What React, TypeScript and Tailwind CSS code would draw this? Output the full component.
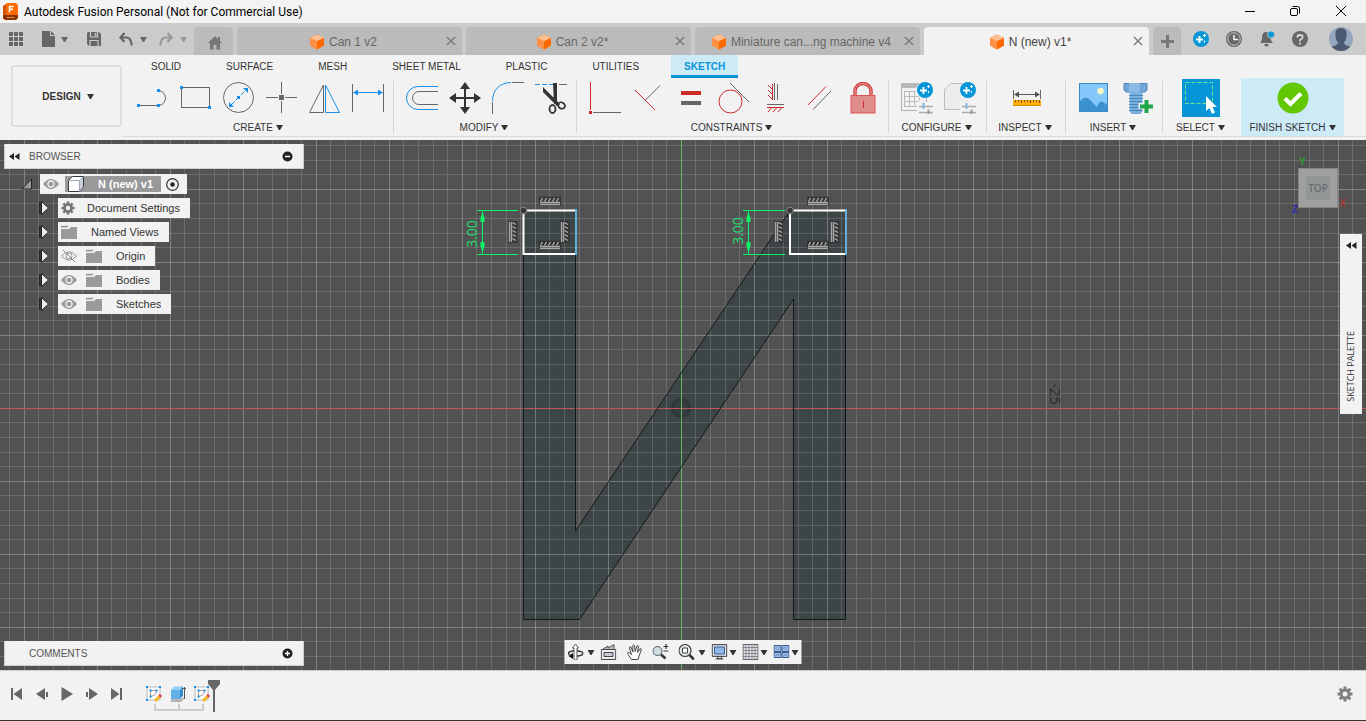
import React, { ReactNode } from 'react'
import clsx from 'clsx'

const GRAY = '#666666'
const BLUE = '#1b8fe6'
const RED = '#cf2a2a'

type IconProps = {
  w?: number
  h?: number
  children: ReactNode
}

function Icon({ w = 32, h = 32, children }: IconProps) {
  return (
    <svg width={w} height={h} viewBox={`0 0 ${w} ${h}`} fill="none" aria-hidden="true" className="shrink-0">
      {children}
    </svg>
  )
}

function Caret({ color = '#333333' }: { color?: string }) {
  return (
    <Icon w={7} h={5}>
      <path d="M0 0h7L4 5H3z" fill={color} />
    </Icon>
  )
}

/* ---------- title bar ---------- */

function TitleBar() {
  return (
    <header className="flex h-[23px] shrink-0 items-center bg-[#f3f3f3] pl-[3px]">
      <Icon w={15} h={17}>
        <path d="M2 2 4 0h9l2 2v11H2z" fill="#ff6b00" />
        <path d="M0 3l3-2v12l-1 3H0z" fill="#d45200" />
        <path d="M0 12h15v3l-2 2H2l-2-2z" fill="#8a3300" />
        <path d="M6.500 9.500v-6h4M6.500 6.300h3.500" stroke="#fff" strokeWidth="1.500" />
        <path d="M4 14.500h7" stroke="#e9a878" strokeDasharray="2 0.600" />
      </Icon>
      <h1 className="ml-1.5 font-[Roboto,sans-serif] text-xs leading-4 text-black">
        Autodesk Fusion Personal (Not for Commercial Use)
      </h1>
      <div className="ml-auto flex h-full items-center pb-0.5 pr-[2px]">
        <button aria-label="Minimize" className="flex w-[45px] justify-center">
          <Icon w={12} h={12}><path d="M1 6.500h10" stroke="#000" /></Icon>
        </button>
        <button aria-label="Restore" className="flex w-[45px] justify-center">
          <Icon w={12} h={12}>
            <rect x="1.500" y="3.500" width="7" height="7" rx="1.500" stroke="#000" />
            <path d="M3.500 1.500h5a2 2 0 0 1 2 2v5" stroke="#000" />
          </Icon>
        </button>
        <button aria-label="Close" className="flex w-[47px] justify-center">
          <Icon w={12} h={12}><path d="m1 1 10 10M11 1 1 11" stroke="#000" /></Icon>
        </button>
      </div>
    </header>
  )
}

/* ---------- document tabs ---------- */

function OrangeCube() {
  return (
    <Icon w={14} h={16}>
      <path d="M7 .5 14 4v7.500L7 15.500 0 11.500V4z" fill="#ff7a1a" />
      <path d="M7 .5 14 4 7 7.300 0 4z" fill="#ffc091" />
      <path d="M0 4l7 3.300v8.200l-7-4z" fill="#ff9147" />
      <path d="M14 4 7 7.300v8.200l7-4z" fill="#ff6a00" />
    </Icon>
  )
}

function CloseMark() {
  return (
    <Icon w={12} h={12}>
      <path d="m2 2 8 8M10 2l-8 8" stroke="#777" strokeWidth="1.300" />
    </Icon>
  )
}

const docs = [
  { name: 'Can 1 v2' },
  { name: 'Can 2 v2*' },
  { name: 'Miniature can...ng machine v4' },
  { name: 'N (new) v1*', active: true },
]

function TabBar() {
  return (
    <div className="flex h-8 shrink-0 items-end gap-1 bg-[#cbcbcb]">
      <div className="flex h-8 w-[190px] items-center pl-2">
        <button aria-label="Data panel" className="w-4">
          <Icon w={16} h={14}>
            {[0, 5, 10].map((y) => [1, 6, 11].map((x) => (
              <rect key={`${x}-${y}`} x={x} y={y} width="4" height="4" fill={GRAY} />
            )))}
          </Icon>
        </button>
        <button aria-label="File" className="ml-[17px] flex items-center gap-[6px]">
          <Icon w={14} h={16}>
            <path d="M1 0h8v5h5v11H1z" fill={GRAY} />
            <path d="M10 0l4 4h-4z" fill={GRAY} />
          </Icon>
          <Caret color={GRAY} />
        </button>
        <button aria-label="Save" className="ml-[18px]">
          <Icon w={16} h={14}>
            <path d="M2 0h11l2 2v12H3l-2-2V1z" fill={GRAY} />
            <path d="M4.500 0v5h7V0M4 14V8.500h8V14" stroke="#cbcbcb" strokeWidth="1.200" />
            <path d="M9.500 1v3" stroke="#cbcbcb" strokeWidth="1.500" />
          </Icon>
        </button>
        <button aria-label="Undo" className="ml-[17px] flex items-center gap-[7px]">
          <Icon w={14} h={14}>
            <path d="M2 5.500h5.500q5 .5 5 8" stroke={GRAY} strokeWidth="2.200" />
            <path d="M5.500 1 1.500 5.500l4 4.500" stroke={GRAY} strokeWidth="2.200" />
          </Icon>
          <Caret color={GRAY} />
        </button>
        <button aria-label="Redo" className="ml-3 flex items-center gap-[7px]">
          <Icon w={14} h={14}>
            <path d="M12 5.500H6.500q-5 .5-5 8" stroke="#999" strokeWidth="2.200" />
            <path d="M8.500 1l4 4.500-4 4.500" stroke="#999" strokeWidth="2.200" />
          </Icon>
          <Caret color="#999" />
        </button>
      </div>
      <button aria-label="Home" className="flex h-7 w-[39px] items-center justify-center rounded-t bg-[#bbbbbb] pl-0.5 pt-0.5">
        <Icon w={16} h={15}>
          <path d="M8 1 1 8h2v6.500h3.500V10h3v4.500H13V8h2L13 6V2h-2v2z" fill="#777" />
        </Icon>
      </button>
      {docs.map((doc) => (
        <div
          key={doc.name}
          className={clsx(
            'flex h-7 min-w-0 flex-1 items-center rounded-t pl-[5px] pr-[5px]',
            doc.active ? 'bg-[#f2f2f2] text-[#444444]' : 'bg-[#bbbbbb] text-[#666666]',
          )}
        >
          <button className="flex min-w-0 flex-1 items-center justify-center gap-[5px] pt-0.5 text-xs">
            <OrangeCube />
            <span className="truncate">{doc.name}</span>
          </button>
          <button aria-label={`Close ${doc.name}`}><CloseMark /></button>
        </div>
      ))}
      <button aria-label="New design" className="flex h-7 w-7 items-center justify-center rounded-t bg-[#bbbbbb]">
        <Icon w={13} h={13}><path d="M6.500 0v13M0 6.500h13" stroke="#777" strokeWidth="3" /></Icon>
      </button>
      <div className="flex h-8 w-[181px] items-center pl-2">
        <button aria-label="Extensions" className="flex w-[33px] justify-start"><AiBadge /></button>
        <button aria-label="Job status" className="flex w-[33px] justify-start">
          <Icon w={16} h={16}>
            <circle cx="8" cy="8" r="8" fill={GRAY} />
            <circle cx="8" cy="8" r="6.200" stroke="#cbcbcb" />
            <path d="M8 4v4.500h4" stroke="#fff" strokeWidth="1.400" />
          </Icon>
        </button>
        <button aria-label="Notifications" className="flex w-[33px] justify-start">
          <Icon w={16} h={16}>
            <path d="M7 1q4 0 4.500 5c0 3 1 4.500 2.500 6H1c2-2 2-4 2-6Q3.500 1 7 1z" fill={GRAY} />
            <path d="M5.500 13h4v1.500q-2 2-4 0z" fill={GRAY} />
            <circle cx="12" cy="3.500" r="3.500" fill="#0696d7" stroke="#cbcbcb" strokeWidth=".8" />
          </Icon>
        </button>
        <button aria-label="Help" className="flex w-[33px] justify-start">
          <Icon w={16} h={16}>
            <circle cx="8" cy="8" r="8" fill={GRAY} />
            <path d="M5.300 6.500Q5.300 4 8 4t2.700 2.200Q10.700 7.500 8 9v1.200M8 11.500v2" stroke="#d8d8d8" strokeWidth="1.800" />
          </Icon>
        </button>
        <button aria-label="Account" className="ml-1">
          <Icon w={24} h={24}>
            <clipPath id="avatar"><circle cx="12" cy="12" r="12" /></clipPath>
            <g clipPath="url(#avatar)">
              <rect width="24" height="24" fill="#93a6bd" />
              <path d="M12 1c4.500 0 6 3 5.500 8-.3 4-1.500 5-2.500 6.500.5 3 3 3 6 4V24H3v-4.500c3-1 5.500-1 6-4C8 14 6.800 13 6.500 9 6 4 7.500 1 12 1z" fill="#4b5a70" />
            </g>
          </Icon>
        </button>
      </div>
    </div>
  )
}

function AiBadge() {
  return (
    <Icon w={16} h={16}>
      <circle cx="8" cy="8" r="8" fill="#0696d7" />
      <path d="M6.500 5v7M3 8.500h7" stroke="#fff" strokeWidth="2" />
      <path d="M11.500 3v3M10 4.500h3M11.500 9.500v2" stroke="#fff" strokeWidth="1.200" />
    </Icon>
  )
}

/* ---------- ribbon ---------- */

const createTools: [string, ReactNode][] = [
  ['Line', (
    <>
      <path d="M1 23.500h20a7.500 7.500 0 0 0 0-15" stroke={GRAY} />
      <path d="M0 22h3v3H0zM20 22h3v3h-3zM20 7h3v3h-3z" fill={BLUE} />
    </>
  )],
  ['Rectangle', (
    <>
      <rect x="1.500" y="5.500" width="28" height="20" stroke={GRAY} />
      <path d="M0 4h3v3H0zM28 24h3v3h-3z" fill={BLUE} />
    </>
  )],
  ['Circle', (
    <>
      <circle cx="15.500" cy="15.500" r="15" stroke={GRAY} />
      <path d="M8 23 23 8" stroke={BLUE} strokeDasharray="5 2" />
      <path d="M6 25v-5l5 5zM25 6v5l-5-5zM14 14h3v3h-3z" fill={BLUE} />
    </>
  )],
  ['Point', (
    <>
      <path d="M15.500 0v31M0 15.500h31" stroke={GRAY} />
      <path d="M12.500 12.500h6v6h-6z" fill="#666" stroke="#f2f2f2" />
    </>
  )],
  ['Mirror', (
    <>
      <path d="M14.500 3v27.500h-14z" stroke={GRAY} />
      <path d="M16.500 3v27.500h14z" stroke={BLUE} />
    </>
  )],
  ['Dimension', (
    <>
      <path d="M.5 2v28M31.500 2v28" stroke={GRAY} />
      <path d="M2 10.500h28" stroke={BLUE} />
      <path d="M1 10.500 6 7.500v6zM31 10.500l-5-3v6z" fill={BLUE} />
    </>
  )],
]

const modifyTools: [string, ReactNode][] = [
  ['Offset', (
    <>
      <path d="M32 4.500H12a11.500 11.500 0 0 0 0 23h20" stroke={BLUE} />
      <path d="M32 9.500H13a6.500 6.500 0 0 0 0 13h19" stroke={GRAY} />
    </>
  )],
  ['Move', (
    <>
      <path d="M16 5v22M5 16h22" stroke="#333" strokeWidth="2" />
      <path d="M16 0l5 7H11zM16 32l5-7H11zM0 16l7-5v10zM32 16l-7-5v10z" fill="#333" />
    </>
  )],
  ['Fillet', (
    <>
      <path d="M.5 19C.5 8 8 .5 19 .5" stroke={BLUE} />
      <path d="M.5 20v12M20 .5h12" stroke={GRAY} />
    </>
  )],
  ['Trim', (
    <>
      <path d="M0 2.500h19" stroke={BLUE} strokeDasharray="5 2" />
      <path d="M24 2.500h8" stroke={GRAY} />
      <path d="M18 1h4v18l-3 3zM8 5l14 14 3 4-3 1L8 10z" fill="#333" />
      <ellipse cx="17.500" cy="27" rx="3" ry="4" stroke="#333" strokeWidth="1.800" />
      <ellipse cx="26.500" cy="23.500" rx="3.600" ry="3" stroke="#333" strokeWidth="1.800" transform="rotate(35 26.500 23.500)" />
    </>
  )],
]

const constraintTools: [string, ReactNode][] = [
  ['Horizontal/Vertical', (
    <>
      <path d="M1.500 0v28" stroke={RED} />
      <path d="M4 30.500h28" stroke={GRAY} />
      <path d="M0 29h3v3H0z" fill={RED} />
    </>
  )],
  ['Perpendicular', (
    <>
      <path d="M3 8l20 20" stroke={RED} />
      <path d="M13.500 18 28 3.500" stroke={GRAY} />
    </>
  )],
  ['Equal', (
    <>
      <path d="M6 9h20v4H6z" fill={RED} />
      <path d="M6 19h20v4H6z" fill={GRAY} />
    </>
  )],
  ['Tangent', (
    <>
      <circle cx="12.500" cy="19.500" r="11.500" stroke={RED} />
      <path d="M12 1l19 19" stroke={GRAY} />
    </>
  )],
  ['Collinear', (
    <>
      <path d="M13.500 1v17M16.500 2v16" stroke={GRAY} />
      <path d="M11.500 2v16M11 7 7 3M11 12 7 8M11 17l-4-4M6 25.500h17M7 30l3.500-4M12 30l3.500-4M17 30l3.500-4" stroke={RED} />
      <path d="M6 22.500h17" stroke={GRAY} />
    </>
  )],
  ['Parallel', (
    <>
      <path d="M4 23 22 4.500" stroke={RED} />
      <path d="M9 27.500 27 9" stroke={GRAY} />
    </>
  )],
  ['Fix/Unfix', (
    <>
      <path d="M8 13V9a8 7.500 0 0 1 16 0v4" stroke="#d43f3f" strokeWidth="3.500" />
      <path d="M8 13V9a8 7.500 0 0 1 16 0v4" stroke="#e7a0a0" />
      <rect x="4" y="13.500" width="24" height="17.500" fill="#df8c8c" stroke="#d55" />
      <path d="M16.500 19v7" stroke={RED} />
    </>
  )],
]

function ConfigBadge() {
  return (
    <>
      <circle cx="24" cy="8" r="9" fill="#f2f2f2" />
      <g transform="translate(16 0)">
        <circle cx="8" cy="8" r="8" fill="#0696d7" />
        <path d="M6.500 5v7M3 8.500h7" stroke="#fff" strokeWidth="1.800" />
        <path d="M11.500 3v3M10 4.500h3M11.500 9v2" stroke="#fff" />
      </g>
      <path d="M18 24.500h14M18 30.500h14" stroke="#aaa" strokeWidth="1.500" />
      <path d="M22.500 21v6" stroke="#7db8e4" strokeWidth="2" />
      <path d="M27.500 27.500v5" stroke="#999" strokeWidth="2" />
    </>
  )
}

const configureTools: [string, ReactNode][] = [
  ['Configure table', (
    <>
      <path d="M16 28.500H.5V1.500h25V20" stroke="#b3b3b3" />
      <path d="M0 1h26v5H0z" fill="#b8b8b8" />
      <path d="M3 9.500h20M3 14.500h20M3 19.500h14M3 24.500h13M3.500 9v16M8.500 9v16M13.500 9v16M18.500 9v10" stroke="#bbb" />
      <ConfigBadge />
    </>
  )],
  ['Configure model', (
    <>
      <path d="M16 27.500H.5v-20L7 1.500h18" stroke="#bbb" />
      <path d="M1 8 7 2h18v18h-9v7H1z" fill="#ececec" />
      <ConfigBadge />
    </>
  )],
]

const inspectTools: [string, ReactNode][] = [
  ['Measure', (
    <>
      <path d="M2.500 8v9M29.500 8v9" stroke={GRAY} />
      <path d="M4 12.500h24" stroke="#555" />
      <path d="M3 12.500l5-3v6zM29 12.500l-5-3v6z" fill="#555" />
      <rect x="2" y="18" width="28" height="6" fill="#ffae10" />
      <path d="M2 23.500h28" stroke="#e08e00" />
      <path d="M4.500 18v2M7.500 18v2M10.500 18v3M13.500 18v2M16.500 18v2M19.500 18v3M22.500 18v2M25.500 18v2M28.500 18v3" stroke="#7a4d00" />
    </>
  )],
]

const insertTools: [string, ReactNode][] = [
  ['Insert image', (
    <>
      <rect x="1.500" y="1.500" width="28" height="28" fill="#84c7fb" stroke="#3f87c0" />
      <circle cx="22.500" cy="9" r="3.200" fill="#fff8c4" />
      <path d="M2 19q6-7 12 1l5 5q3-7 6-5l4 3v6.500H2z" fill="#3a93cf" />
    </>
  )],
  ['Insert fastener', (
    <>
      <path d="M3 1.500h23V8l-2 2H5L3 8z" fill="#6fa8d8" stroke="#4f86b5" />
      <path d="M8 1h11v9H8z" fill="#8bbbe4" />
      <path d="M8.500 10h13v19l-2 3h-9l-2-3z" fill="#79afdf" />
      <path d="M8 13.500h14M8 16.500h14M8 19.500h14M8 22.500h14M8 25.500h14M8 28.500h14" stroke="#4a85b8" />
      <path d="M24.500 17v14M17.500 24h14" stroke="#f2f2f2" strokeWidth="6" />
      <path d="M25.500 18v13M19 24.500h13" stroke="#1fa84a" strokeWidth="4" />
    </>
  )],
]

type GroupProps = {
  label: string
  tools: [string, ReactNode][]
  minWidth?: string
}

function RibbonGroup({ label, tools, minWidth }: GroupProps) {
  return (
    <>
      <div className={clsx('flex flex-col items-center', minWidth)}>
        <div className="flex h-10 items-center">
          {tools.map(([name, art]) => (
            <button key={name} aria-label={name} className="flex w-[43px] justify-center">
              <Icon>{art}</Icon>
            </button>
          ))}
        </div>
        <div className="pr-1">
          <GroupLabel>{label}</GroupLabel>
        </div>
      </div>
      <div className="ml-1 mr-1.5 mt-[3px] h-[52px] w-px bg-[#d6d6d6]" />
    </>
  )
}

function GroupLabel({ children }: { children: ReactNode }) {
  return (
    <button className="flex h-[18px] items-center gap-[3px] whitespace-nowrap text-[10px] text-[#333333]">
      {children}
      <Caret />
    </button>
  )
}

const workspaces = ['SOLID', 'SURFACE', 'MESH', 'SHEET METAL', 'PLASTIC', 'UTILITIES', 'SKETCH']

function Ribbon() {
  return (
    <div className="flex h-[85px] shrink-0 items-start overflow-hidden bg-[#f2f2f2] pl-[11px]">
      <button className="mt-2.5 flex h-[62px] w-[111px] shrink-0 items-center justify-center gap-1.5 rounded border-2 border-[#dedede] pl-[3px] text-[10px] font-bold text-[#333333]">
        DESIGN
        <Caret />
      </button>
      <div className="min-w-0 flex-1">
        <nav className="flex h-[23px] gap-[19px] pl-4">
          {workspaces.map((name) => (
            <button
              key={name}
              className={clsx(
                'h-[23px] whitespace-nowrap px-[13px] text-[10px]',
                name === 'SKETCH'
                  ? 'border-b-3 border-[#0696d7] bg-[#cdeaf7] pt-[3px] font-bold text-[#0696d7]'
                  : 'text-[#333333]',
              )}
            >
              {name}
            </button>
          ))}
        </nav>
        <div className="flex h-[59px] border-b border-[#dcdcdc] pl-[9px]">
          <RibbonGroup label="CREATE" tools={createTools} />
          <RibbonGroup label="MODIFY" tools={modifyTools} />
          <RibbonGroup label="CONSTRAINTS" tools={constraintTools} />
          <RibbonGroup label="CONFIGURE" tools={configureTools} minWidth="min-w-[87px]" />
          <RibbonGroup label="INSPECT" tools={inspectTools} minWidth="min-w-[68px]" />
          <RibbonGroup label="INSERT" tools={insertTools} />
          <div className="flex w-[63px] flex-col items-center">
            <div className="flex h-10 items-center">
              <button aria-label="Select" className="bg-[#0696d7]">
                <Icon w={38} h={38}>
                  <rect x="3.500" y="3.500" width="27" height="21" stroke="#6fe38d" strokeDasharray="4 2" />
                  <path d="M24 17v15l3.500-3 2.500 6 3-1.500-2.500-5.500H35z" fill="#fff" />
                </Icon>
              </button>
            </div>
            <GroupLabel>SELECT</GroupLabel>
          </div>
          <div className="ml-[9px] flex w-[103px] flex-col items-center bg-[#cdeaf7]">
            <button aria-label="Finish sketch" className="flex h-10 items-center">
              <Icon>
                <circle cx="16" cy="16" r="15.500" fill="#62c805" />
                <path d="M8 16.500l5.500 5.500L24 11.500" stroke="#fff" strokeWidth="4" />
              </Icon>
            </button>
            <GroupLabel>FINISH SKETCH</GroupLabel>
          </div>
        </div>
      </div>
    </div>
  )
}

/* ---------- sketch canvas ---------- */

const STEP = 14.6
const ORIGIN = { x: 681, y: 408 }

const steps = Array.from({ length: 121 }, (_, i) => i - 60)

function Hatch({ x, y, turn = 0 }: { x: number; y: number; turn?: number }) {
  return (
    <g transform={`translate(${x} ${y}) rotate(${turn})`}>
      <rect x="-11" y="-4.500" width="22" height="9.500" rx="1" fill="#303030" opacity=".8" />
      <path d="M-10 1.500h20M-10 3.500h20" stroke="#a8a8a8" strokeWidth="1.400" />
      <path d="M-9.500 .5l2-3.500M-5.500 .5l2-3.500M-1.500 .5l2-3.500M2.500 .5l2-3.500M6.500 .5l2-3.500" stroke="#b5b5b5" strokeWidth="1.200" />
    </g>
  )
}

function Dimension({ x, textX, textY, end }: { x: number; textX: number; textY: number; end: number }) {
  return (
    <g>
      <path d={`M${x - 5.5} 210.500H${end}M${x - 5.5} 254.500H${end}M${x} 210v44`} stroke="#0cf26a" />
      <path d={`M${x - 2} 217h4v5h-4zM${x - 2} 242h4v5h-4zM${x} 211l1.500 6h-3zM${x} 254l1.500-7h-3z`} fill="#0cf26a" />
      <text
        transform={`translate(${textX} ${textY}) rotate(-90)`}
        textAnchor="middle"
        fontFamily="Open Sans, sans-serif"
        fontSize="14"
        fill="#1fe070"
      >
        3.00
      </text>
    </g>
  )
}

function SketchCanvas() {
  return (
    <svg
      viewBox="0 140 1366 530"
      preserveAspectRatio="xMidYMid slice"
      className="absolute inset-0 h-full w-full bg-[#525252]"
      fill="none"
      role="img"
      aria-label="Sketch"
    >
      <path
        d="M523.500 210.500H575.500V531L790 210.500H845.500V619.500H793.500V299L579.500 619.500H523.500z"
        fill="#3d4547"
      />
      <g stroke="#ffffff" shapeRendering="crispEdges">
        {steps.map((i) => {
          const x = ORIGIN.x + Math.floor(i * STEP + 0.3) + 0.5
          const y = ORIGIN.y + Math.floor(i * STEP + 0.3) + 0.5
          return (
            <path key={i} d={`M${x} 0V900M0 ${y}H1400`} opacity={i % 5 === 0 ? 0.27 : 0.15} />
          )
        })}
      </g>
      <circle cx="681" cy="408" r="10" fill="#2c3233" opacity=".35" />
      <circle cx="681" cy="408" r="8.500" stroke="#2c3233" strokeWidth="3" opacity=".6" />
      <path d="M0 408.500H1400" stroke="#c4555a" />
      <path d="M681.500 0V900" stroke="#62b562" />
      <path
        d="M523.500 210.500H575.500V531L790 210.500H845.500V619.500H793.500V299L579.500 619.500H523.500z"
        stroke="#10191c"
      />

      <path d="M576 210.500H523.500V254H576" stroke="#ffffff" strokeWidth="2" />
      <path d="M576 209v46" stroke="#5fb0da" strokeWidth="2" />
      <path d="M846 210.500H790V254H846" stroke="#ffffff" strokeWidth="2" />
      <path d="M846 209v46" stroke="#5fb0da" strokeWidth="2" />
      <circle cx="523.500" cy="210.500" r="3.300" fill="#383838" stroke="#888" />
      <circle cx="790" cy="210.500" r="3.300" fill="#383838" stroke="#888" />

      <Hatch x={550} y={201} />
      <Hatch x={550} y={245} />
      <Hatch x={513} y={232} turn={90} />
      <Hatch x={565} y={232} turn={90} />
      <Hatch x={818} y={201} />
      <Hatch x={818} y={245} />
      <Hatch x={779} y={232} turn={90} />
      <Hatch x={835} y={232} turn={90} />

      <Dimension x={482.5} textX={477} textY={234} end={518} />
      <Dimension x={748.5} textX={743} textY={231} end={785} />

      <text
        transform="translate(1050 394) rotate(90)"
        textAnchor="middle"
        fontFamily="Open Sans, sans-serif"
        fontSize="15"
        fill="#2b2b2b"
      >
        -25
      </text>
    </svg>
  )
}

function Eye({ off }: { off?: boolean }) {
  return (
    <Icon w={16} h={12}>
      {off ? (
        <>
          <path d="M.5 6Q8-2.500 15.500 6 8 14.500.5 6z" stroke="#999" />
          <circle cx="8" cy="6" r="3" stroke="#999" />
          <path d="M2 0l12 12" stroke="#888" />
        </>
      ) : (
        <>
          <path d="M0 6Q8-4 16 6 8 16 0 6z" fill="#999" />
          <circle cx="8" cy="6" r="3" stroke="#f2f2f2" strokeWidth="1.300" />
        </>
      )}
    </Icon>
  )
}

function Folder() {
  return (
    <Icon w={16} h={14}>
      <path d="M0 4h8l2-2h6v12H0z" fill="#9a9a9a" />
      <path d="M0 .8h7.500l-1 1.700H0z" fill="#9a9a9a" />
    </Icon>
  )
}

function Gear({ size, color, hole }: { size: number; color: string; hole: string }) {
  return (
    <svg width={size} height={size} viewBox="0 0 16 16" fill="none" aria-hidden="true">
      <circle cx="8" cy="8" r="5.500" fill={color} />
      {[0, 45, 90, 135].map((a) => (
        <path key={a} d="M8 0.500v15" stroke={color} strokeWidth="3" transform={`rotate(${a} 8 8)`} />
      ))}
      <circle cx="8" cy="8" r="2.500" fill={hole} />
    </svg>
  )
}

function Expander() {
  return (
    <button aria-label="Expand" className="w-[19px]">
      <Icon w={12} h={16}>
        <path d="M.8 2v12" stroke="#222" strokeWidth="1.500" />
        <path d="M2.500 1.500 9.500 8l-7 6.500z" fill="#eee" stroke="#222" />
      </Icon>
    </button>
  )
}

type Node = {
  name: string
  kind: 'settings' | 'folder'
  eye?: 'on' | 'off'
}

const nodes: Node[] = [
  { name: 'Document Settings', kind: 'settings' },
  { name: 'Named Views', kind: 'folder' },
  { name: 'Origin', kind: 'folder', eye: 'off' },
  { name: 'Bodies', kind: 'folder', eye: 'on' },
  { name: 'Sketches', kind: 'folder', eye: 'on' },
]

function Browser() {
  return (
    <section className="w-[300px]">
      <div className="flex h-[25px] items-center border border-t-0 border-[#cfcfcf] bg-[#f2f2f2] pl-1 pr-2.5">
        <button aria-label="Collapse browser"><Rewind /></button>
        <h2 className="ml-[9px] text-[10px] text-[#555555]">BROWSER</h2>
        <button aria-label="Minimize browser" className="ml-auto">
          <Icon w={11} h={11}>
            <circle cx="5.500" cy="5.500" r="5" fill="#222" />
            <path d="M3 5.500h5" stroke="#fff" strokeWidth="1.500" />
          </Icon>
        </button>
      </div>
      <ul className="mt-[5px] flex flex-col gap-1 text-[11px] text-[#333333]">
        <li className="flex items-center pl-[17px]">
          <button aria-label="Collapse" className="w-[19px]">
            <Icon w={12} h={12}><path d="M10.500 1v10H.8z" fill="#999" stroke="#222" /></Icon>
          </button>
          <div className="flex h-5 items-center bg-[#f2f2f2] pl-[3px] pr-2">
            <Eye />
            <div className="ml-1.5 flex h-4 items-center bg-[#999999] pl-[3px] pr-2 font-bold text-white">
              <Icon w={16} h={16}>
                <path d="M.5 4.500 4.500.5h11v10l-4 5H.5z" fill="#fff" stroke="#333a44" />
                <path d="M.5 4.500h11v11M11.500 4.500l4-4" stroke="#9aa4b5" />
                <path d="M12 5l3-3.500v9l-3 4z" fill="#c9ced8" />
              </Icon>
              <span className="ml-3.5">N (new) v1</span>
            </div>
            <button aria-label="Activate component" className="ml-[5px]">
              <Icon w={13} h={13}>
                <circle cx="6.500" cy="6.500" r="5.800" stroke="#333" strokeWidth="1.200" />
                <circle cx="6.500" cy="6.500" r="2.200" fill="#222" />
              </Icon>
            </button>
          </div>
        </li>
        {nodes.map((node) => (
          <li key={node.name} className="flex items-center pl-[35px]">
            <Expander />
            <div className="flex h-5 items-center bg-[#f2f2f2] pl-[3px] pr-2.5">
              {node.eye && <div className="mr-[9px]"><Eye off={node.eye === 'off'} /></div>}
              {node.kind === 'settings' ? <Gear size={14} color="#777" hole="#f2f2f2" /> : <Folder />}
              <span className={node.kind === 'settings' ? 'ml-3' : 'ml-3.5'}>{node.name}</span>
            </div>
          </li>
        ))}
      </ul>
    </section>
  )
}

function Rewind() {
  return (
    <Icon w={11} h={7}>
      <path d="M5 0v7L0 3.500zM10.500 0v7l-5-3.500z" fill="#222" />
    </Icon>
  )
}

function ViewCube() {
  return (
    <div className="absolute right-7 top-7 size-10">
      <button className="flex size-10 items-center justify-center border border-[#858585] bg-[#a0a0a0] text-[10px] text-[#666b6e]">
        <span className="flex size-6 items-center justify-center bg-[#939798] font-['Open_Sans',sans-serif] font-semibold">TOP</span>
      </button>
      <span className="absolute -top-3 left-px text-[10px] font-bold leading-3 text-[#2fa02f]">Y</span>
      <span className="absolute -right-2 top-[30px] text-[10px] leading-3 text-[#c82a2a]">X</span>
      <span className="absolute -left-1.5 top-9 text-[10px] font-bold leading-3 text-[#2b2bb0]">Z</span>
    </div>
  )
}

type NavItem = {
  name: string
  art: ReactNode
  spacing: string
  menu?: boolean
}

const navItems: NavItem[] = [
  {
    name: 'Orbit', menu: true, spacing: 'gap-1',
    art: (
      <>
        <path d="M2 11Q-1 8 5 7h6q6 1 4 3.500-2 2-9 1.500" stroke="#333" strokeWidth="1.400" />
        <path d="M6.500 16V4H5l3-4 3 4H9.500v12z" fill="#fff" stroke="#333" strokeWidth=".8" />
        <path d="M1 12l4.500-3v6z" fill="#111" />
      </>
    ),
  },
  {
    name: 'Look at', spacing: 'pr-1',
    art: (
      <>
        <path d="M2.500 5l5-3v2l6-3.500V5" stroke="#555" fill="#bbb" />
        <path d="M.8 5.500h14.400v10H.8z" fill="#eceef2" stroke="#444" />
        <path d="M3.500 8.500h9v4h-9z" fill="#c5cad6" stroke="#444" />
      </>
    ),
  },
  {
    name: 'Pan', spacing: 'pr-1',
    art: (
      <path
        d="M5 15.500 1 9.500q0-1.500 1.500-1L5 10.500 3 4q0-1.500 1.300-1.200L6.500 8 6.300 1.500Q7 0 8 1.500L8.700 7.500 10.500 2q1-1 1.500.3L11 8.500l2.500-3.700q1.500-.5 1.300 1L12.500 12l-1 3.500z"
        fill="#fff" stroke="#333" strokeWidth=".9"
      />
    ),
  },
  {
    name: 'Zoom', spacing: 'pr-1',
    art: (
      <>
        <circle cx="5" cy="7" r="4.500" fill="#cde0de" stroke="#556" />
        <path d="M8.500 10.500l4.500 4" stroke="#333" strokeWidth="2.500" />
        <path d="M13.500 0v5M11 2.500h5M11 7h5" stroke="#333" strokeWidth="1.200" />
      </>
    ),
  },
  {
    name: 'Zoom window', menu: true, spacing: 'gap-1',
    art: (
      <>
        <circle cx="6.500" cy="6.500" r="6" fill="#dfe7e8" stroke="#444" strokeWidth="1.200" />
        <path d="M4 4h5v5H4z" fill="#fff" stroke="#444" />
        <path d="M11 11l4.500 4.500" stroke="#333" strokeWidth="2.500" />
      </>
    ),
  },
  {
    name: 'Display settings', menu: true, spacing: 'gap-0.5',
    art: (
      <>
        <path d="M.7.7h14.600v11.600H.7z" fill="#e4e8ef" stroke="#333" />
        <path d="M3 3h10v7H3z" fill="#92b8e6" stroke="#355a94" />
        <path d="M6 12.500h4v2H6zM4 15h8" stroke="#444" />
      </>
    ),
  },
  {
    name: 'Grid and snaps', menu: true, spacing: 'gap-0.5',
    art: (
      <>
        <path d="M.5.5h15v15H.5z" fill="#e8e8ee" stroke="#555" />
        <path d="M3.500 0v16M6.500 0v16M9.500 0v16M12.500 0v16M0 3.500h16M0 6.500h16M0 9.500h16M0 12.500h16" stroke="#85858d" />
      </>
    ),
  },
  {
    name: 'Viewports', menu: true, spacing: 'gap-0.5',
    art: (
      <>
        <path d="M.5 1.500h7v6h-7zM8.500 1.500h7v6h-7zM.5 8.500h7v5h-7zM8.500 8.500h7v5h-7z" fill="#9dbfe8" stroke="#3a5a90" />
        <path d="M2.500 3.500h3v2h-3zM10.500 3.500h3v2h-3zM2.500 10.500h3v1h-3zM10.500 10.500h3v1h-3z" stroke="#7ba0d2" />
      </>
    ),
  },
]

function NavBar() {
  return (
    <div className="absolute bottom-1.5 left-1/2 flex h-6 -translate-x-1/2 items-center gap-1.5 bg-[#f2f2f2] px-[3px]">
      {navItems.map((item) => (
        <button key={item.name} aria-label={item.name} className={clsx('flex items-center', item.spacing)}>
          <Icon w={16} h={16}>{item.art}</Icon>
          {item.menu && <Caret />}
        </button>
      ))}
    </div>
  )
}

/* ---------- timeline ---------- */

const playback: [string, string][] = [
  ['To start', 'M1 1h2v12H1zM12 1v12L3.500 7z'],
  ['Step back', 'M10 1v12L1 7zM11 5h2v5h-2z'],
  ['Play', 'M1.500 0v14L13 7z'],
  ['Step forward', 'M4 1v12l9-6zM1 5h2v5H1z'],
  ['To end', 'M10 1h2v12h-2zM1 1v12l8.500-6z'],
]

function SketchFeature() {
  return (
    <Icon w={16} h={16}>
      <rect x="1" y="1" width="13" height="13" fill="#fbfbfb" stroke="#aaa" strokeWidth=".8" />
      <path d="M4.500 10.500v-6h6q0 5-6 6" stroke="#888" strokeWidth=".8" />
      <path d="M0 0h2v2H0zM13 0h2v2h-2zM0 13h2v2H0zM3.500 3.500h2v2h-2zM9.500 3.500h2v2h-2zM3.500 9.500h2v2h-2z" fill="#1b8fe6" />
      <path d="M9 15l5-5" stroke="#f5b52e" strokeWidth="3" />
      <path d="M13.500 10.500l1.500-1.500" stroke="#e6323c" strokeWidth="3" />
    </Icon>
  )
}

function ExtrudeFeature() {
  return (
    <Icon w={16} h={16}>
      <path d="M1 13h10l3-2v2l-3 3H1z" fill="#b5b5b5" />
      <path d="M1 4h9v9H1z" fill="#62b0ea" />
      <path d="M1 4l3-3.500h9L10 4z" fill="#92cbf4" />
      <path d="M10 4l3-3.500v9L10 13z" fill="#3989c7" />
      <path d="M14.500 1v12M13 2.500h3" stroke="#555" />
    </Icon>
  )
}

function Timeline() {
  return (
    <footer className="flex h-[51px] shrink-0 items-center border-b border-t border-b-[#333333] border-t-[#cccccc] bg-[#f2f2f2] pb-[3px] pl-1">
      {playback.map(([name, d]) => (
        <button key={name} aria-label={name} className="flex w-[25px] justify-center">
          <Icon w={13} h={14}><path d={d} fill="#666" /></Icon>
        </button>
      ))}
      <div className="relative ml-[13px] flex">
        <button aria-label="Sketch1" className="flex w-6 justify-center"><SketchFeature /></button>
        <button aria-label="Extrude1" className="flex w-6 justify-center"><ExtrudeFeature /></button>
        <button aria-label="Sketch2" className="flex w-6 justify-center"><SketchFeature /></button>
        <div className="absolute left-3 top-[18px]">
          <Icon w={50} h={8}><path d="M1 0v6h48V0M25 0v6" stroke="#cccccc" strokeWidth="2" /></Icon>
        </div>
        <div className="absolute -top-1.5 left-[66px]">
          <Icon w={12} h={32}><path d="M0 0h12v4L7 10v22H5V10L0 4z" fill="#666" /></Icon>
        </div>
      </div>
      <button aria-label="Timeline settings" className="ml-auto mr-[13px]">
        <Gear size={16} color="#808080" hole="#f2f2f2" />
      </button>
    </footer>
  )
}

export default function App() {
  return (
    <div className="flex h-screen flex-col overflow-hidden bg-[#f2f2f2] font-['Liberation_Sans',Arial,sans-serif]">
      <TitleBar />
      <TabBar />
      <Ribbon />
      <main className="relative min-h-0 flex-1 overflow-hidden">
        <SketchCanvas />
        <div className="absolute inset-0 flex flex-col items-start justify-between p-1">
          <Browser />
          <section className="flex h-[25px] w-[300px] items-center border border-t-0 border-[#cfcfcf] bg-[#f2f2f2] pl-6 pr-2.5">
            <h2 className="text-[10px] text-[#555555]">COMMENTS</h2>
            <button aria-label="Expand comments" className="ml-auto">
              <Icon w={11} h={11}>
                <circle cx="5.500" cy="5.500" r="5" fill="#222" />
                <path d="M3 5.500h5M5.500 3v5" stroke="#fff" strokeWidth="1.300" />
              </Icon>
            </button>
          </section>
        </div>
        <ViewCube />
        <aside className="absolute right-1 top-[94px] flex h-[180px] w-[22px] flex-col items-center justify-between bg-[#f2f2f2] pb-3 pt-2">
          <button aria-label="Expand sketch palette"><Rewind /></button>
          <h2 className="rotate-180 font-['Open_Sans',sans-serif] text-[9px] text-[#333333] [writing-mode:vertical-rl]">
            SKETCH PALETTE
          </h2>
        </aside>
        <NavBar />
      </main>
      <Timeline />
    </div>
  )
}
